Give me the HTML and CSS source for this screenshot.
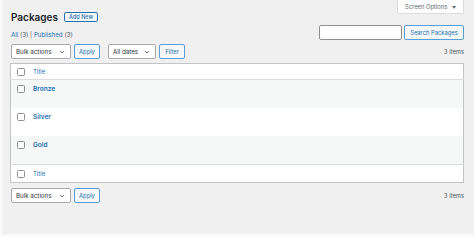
FILE: index.html
```html
<!DOCTYPE html>
<html>
  <head>
    <title>Packages</title>
    <link rel="stylesheet" href="styles.css">
  </head>
  <body>
  <div class="page">
    <div class="top-row">
      <div class="heading">
        <h1 class="title">Packages</h1>
        <a class="add-new" href="#">Add New</a>
      </div>
      <button class="screen-tab">Screen Options <span class="tab-arrow">&#9660;</span></button>
    </div>

    <div class="sub-bar">
      <p class="views"><a href="#">All <span class="count">(3)</span></a> | <a href="#">Published <span class="count">(3)</span></a></p>
      <div class="search-box">
        <input class="search-input" type="search">
        <button class="btn">Search Packages</button>
      </div>
    </div>

    <div class="tablenav">
      <div class="actions">
        <div class="select bulk">Bulk actions
          <svg width="6" height="4" viewBox="0 0 6 4"><path d="M1 1l2 2 2-2" fill="none" stroke="#50575e" stroke-width="0.8"/></svg>
        </div>
        <button class="btn">Apply</button>
        <div class="select dates">All dates
          <svg width="6" height="4" viewBox="0 0 6 4"><path d="M1 1l2 2 2-2" fill="none" stroke="#50575e" stroke-width="0.8"/></svg>
        </div>
        <button class="btn">Filter</button>
      </div>
      <span class="num-items">3 items</span>
    </div>

    <table class="list-table">
      <thead>
        <tr class="head-row"><td class="check"><span class="box"></span></td><td><a href="#">Title</a></td></tr>
      </thead>
      <tbody>
        <tr class="row alt"><td class="check"><span class="box"></span></td><td><a class="row-title" href="#">Bronze</a></td></tr>
        <tr class="row"><td class="check"><span class="box"></span></td><td><a class="row-title" href="#">Silver</a></td></tr>
        <tr class="row alt"><td class="check"><span class="box"></span></td><td><a class="row-title" href="#">Gold</a></td></tr>
      </tbody>
      <tfoot>
        <tr class="foot-row"><td class="check"><span class="box"></span></td><td><a href="#">Title</a></td></tr>
      </tfoot>
    </table>

    <div class="tablenav bottom">
      <div class="actions">
        <div class="select bulk">Bulk actions
          <svg width="6" height="4" viewBox="0 0 6 4"><path d="M1 1l2 2 2-2" fill="none" stroke="#50575e" stroke-width="0.8"/></svg>
        </div>
        <button class="btn">Apply</button>
      </div>
      <span class="num-items">3 items</span>
    </div>
  </div>
  </body>
</html>
```

FILE: styles.css
```css
html, body {
  margin: 0;
  height: 100%;
}
body {
  background-color: #f0f0f1;
  color: #1d2327;
  font-family: Inter, "Liberation Sans", Arial, sans-serif;
  font-size: 6px;
  box-sizing: border-box;
  border-left: 2px solid #fafafa;
  border-bottom: 3px solid #fafafa;
}
a {
  color: #2271b1;
  text-decoration: none;
}
.page {
  padding: 0 10px 0 8px;
}
.top-row {
  display: flex;
  justify-content: space-between;
  align-items: flex-start;
}
.heading {
  display: flex;
  align-items: center;
  gap: 6px;
  margin: 11px 0 0 1px;
}
.title {
  margin: 0;
  font-size: 10px;
  font-weight: 600;
  line-height: 12px;
}
.add-new {
  display: inline-block;
  border: 1px solid #2271b1;
  border-radius: 2px;
  background-color: #f6f7f7;
  font-size: 5.5px;
  font-weight: 500;
  line-height: 8px;
  padding: 0 4px;
}
.screen-tab {
  background-color: #fff;
  border: 1px solid #dcdcde;
  border-top: none;
  border-radius: 0 0 2px 2px;
  color: #646970;
  font-family: inherit;
  font-size: 5.8px;
  height: 14px;
  width: 67px;
  padding: 0;
}
.tab-arrow {
  font-size: 4px;
  margin-left: 3px;
}
.sub-bar {
  display: flex;
  justify-content: space-between;
  align-items: flex-end;
  margin-top: 2px;
}
.views {
  margin: 0 0 1px 1px;
  color: #646970;
  font-size: 6.2px;
  line-height: 8px;
}
.count {
  color: #50575e;
}
.search-box {
  display: flex;
  gap: 2px;
}
.search-input {
  width: 83px;
  height: 15px;
  box-sizing: border-box;
  border: 1px solid #8c8f94;
  border-radius: 2px;
  background-color: #fff;
  margin: 0;
}
.btn {
  height: 15px;
  box-sizing: border-box;
  border: 1px solid #5b9dd9;
  border-radius: 2px;
  background-color: #f6f7f7;
  color: #2271b1;
  font-family: inherit;
  font-size: 5.8px;
  padding: 0 4px;
  margin: 0;
}
.search-box .btn {
  width: 60px;
}
.tablenav {
  display: flex;
  justify-content: space-between;
  align-items: center;
  margin-top: 4px;
  padding-left: 1px;
}
.tablenav.bottom {
  margin-top: 5px;
}
.actions {
  display: flex;
  gap: 3px;
}
.actions .btn {
  width: 26px;
  padding: 0;
}
.select {
  display: flex;
  justify-content: space-between;
  align-items: center;
  height: 15px;
  box-sizing: border-box;
  border: 1px solid #a7aaad;
  border-radius: 2px;
  background-color: #fff;
  color: #2c3338;
  font-size: 6.2px;
  padding: 0 5px 0 4px;
}
.bulk {
  width: 60px;
}
.dates {
  width: 48px;
  margin-left: 5px;
}
.num-items {
  color: #50575e;
  font-size: 5.8px;
}
.list-table {
  width: 454px;
  margin-top: 4px;
  border: 1px solid #c3c4c7;
  border-collapse: collapse;
  background-color: #fff;
  font-size: 6px;
}
.list-table td {
  padding: 0;
  vertical-align: top;
}
.list-table .check {
  width: 22px;
}
.box {
  display: block;
  width: 6px;
  height: 6px;
  border: 1px solid #8c8f94;
  border-radius: 1.5px;
  background-color: #fff;
  margin-left: 6px;
}
.head-row td {
  height: 15px;
  border-bottom: 1px solid #dcdcde;
  vertical-align: middle;
}
.foot-row td {
  height: 17px;
  border-top: 1px solid #dcdcde;
  vertical-align: middle;
}
.row td {
  height: 23px;
  padding-top: 5px;
}
.row.alt {
  background-color: #f6f7f7;
}
.row-title {
  font-weight: 600;
  font-size: 6.5px;
}
```
